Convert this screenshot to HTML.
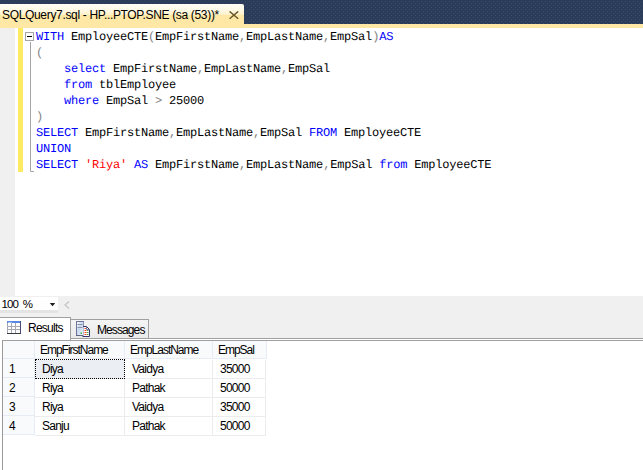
<!DOCTYPE html>
<html><head><meta charset="utf-8">
<style>
*{box-sizing:border-box;margin:0;padding:0}
html,body{width:643px;height:470px;overflow:hidden;background:#fff}
body{position:relative;font-family:"Liberation Sans",sans-serif;font-size:12px;color:#000}
.abs{position:absolute}
#top{left:0;top:0;width:643px;height:24px;background:#2b3c5a}
#tab{left:0;top:4px;width:244px;height:20px;background:linear-gradient(#fffdf6 0,#fffaea 25%,#fff2cc 52%,#ffe8a6 57%,#ffe8a6 100%);border-top-right-radius:2px}
#tabtxt{left:2px;top:8px;font-size:12px;letter-spacing:-0.33px;white-space:nowrap;color:#000}
#band{left:0;top:24px;width:643px;height:4px;background:#ffe8a6}
#gutter{left:0;top:28px;width:15px;height:268px;background:#f0f0f0}
#ybar{left:17.5px;top:28px;width:5.2px;height:144px;background:#ffeb62}
#code{text-rendering:geometricPrecision;left:36px;top:29px;font-family:"Liberation Mono",monospace;font-size:12px;letter-spacing:-0.2px;line-height:16px;white-space:pre;color:#000}
.k{color:#00f}.g{color:#808080}.s{color:#f00}
#strip{left:0;top:296px;width:643px;height:43px;background:#f0f0f0}
#zoom{left:0;top:297px;width:58px;height:13px;background:#fff}
#res{left:2px;top:340px;width:641px;height:130px;background:#fff;border-left:1px solid #9a9a9a;border-top:1px solid #a0a0a0}

#rtab{left:0;top:317px;width:71px;height:23px;background:#fff;border-top:1px solid #a0a0a0;border-right:1px solid #a0a0a0}
#mtab{left:70px;top:319px;width:79px;height:20px;background:linear-gradient(#f4f4f4,#ebebeb);border:1px solid #a0a0a0}
.tl{font-size:12px;line-height:14px;white-space:nowrap;letter-spacing:-0.75px}
#grid{left:3px;top:341px;font-size:12px;letter-spacing:-0.75px}
.row{display:flex;height:19px}
.row.hd{height:18px}
.c{height:100%;border-right:1px solid #e6ecf5;border-bottom:1px solid #e6ecf5;line-height:19px;white-space:nowrap;overflow:hidden}
.row:not(.hd) .c{padding-top:1px}
.row:not(.hd) .c:not(.c0){position:relative;top:1px;padding-top:0;border-color:#ececee}
.hd .c{background:#f9fafc;line-height:19px;letter-spacing:-1.02px}
.hd .c3{width:54px}
.c0{width:32px;padding-left:6px;background:#f9fafc}
.c1{width:90px;padding-left:7px}
.c2{width:88px;padding-left:7px}
.c3{width:53px;padding-left:7px}
.hd .c1,.hd .c2,.hd .c3{padding-left:5px}
.sel{background:#ebeef3;position:relative;overflow:visible}
.sel::after{content:"";position:absolute;left:0;top:-1px;box-sizing:border-box;width:90px;height:20px;border:1px dotted #000}
</style></head><body>
<svg class="abs" style="left:0;top:0" width="643" height="24"><defs><pattern id="dp" width="4" height="4" patternUnits="userSpaceOnUse"><rect width="4" height="4" fill="#2b3b5a"/><rect x="1" y="1" width="1" height="1" fill="#364969"/><rect x="3" y="3" width="1" height="1" fill="#364969"/></pattern></defs><rect width="643" height="24" fill="url(#dp)"/></svg>
<div class="abs" id="tab"></div>
<div class="abs" id="tabtxt">SQLQuery7.sql - HP...PTOP.SNE (sa (53))*</div>
<svg class="abs" style="left:229px;top:11px" width="10" height="9" viewBox="0 0 10 9"><path d="M0.6 0.4 L9.2 7.8 M9.2 0.4 L0.6 7.8" stroke="#665628" stroke-width="1.4" fill="none"/></svg>
<div class="abs" id="band"></div>
<div class="abs" id="gutter"></div>
<div class="abs" id="ybar"></div>
<svg class="abs" style="left:25px;top:28px" width="12" height="146" viewBox="0 0 12 146">
<rect x="0.5" y="4.5" width="8" height="8" fill="#fff" stroke="#a5a5a5"/>
<path d="M2 8.5H7" stroke="#000" stroke-width="1"/>
<path d="M5.5 14V143.5H9" stroke="#a5a5a5" fill="none"/>
</svg>
<div class="abs" id="code"><span class="k">WITH</span> EmployeeCTE<span class="g">(</span>EmpFirstName<span class="g">,</span>EmpLastName<span class="g">,</span>EmpSal<span class="g">)</span><span class="k">AS</span>
<span class="g">(</span>
    <span class="k">select</span> EmpFirstName<span class="g">,</span>EmpLastName<span class="g">,</span>EmpSal
    <span class="k">from</span> tblEmployee
    <span class="k">where</span> EmpSal <span class="g">&gt;</span> 25000
<span class="g">)</span>
<span class="k">SELECT</span> EmpFirstName<span class="g">,</span>EmpLastName<span class="g">,</span>EmpSal <span class="k">FROM</span> EmployeeCTE
<span class="k">UNION</span>
<span class="k">SELECT</span> <span class="s">'Riya'</span> <span class="k">AS</span> EmpFirstName<span class="g">,</span>EmpLastName<span class="g">,</span>EmpSal <span class="k">from</span> EmployeeCTE</div>
<div class="abs" id="strip"></div>
<div class="abs" style="left:0;top:310px;width:58px;height:3px;background:#e4e4e4"></div>
<div class="abs" id="zoom"></div>
<div class="abs" style="left:1.5px;top:297px;font-size:11.5px;line-height:14px;white-space:nowrap;letter-spacing:-0.85px;word-spacing:2.2px">100 %</div>
<svg class="abs" style="left:49px;top:303px" width="7" height="4" viewBox="0 0 7 4"><path d="M0.8 0H6.2L3.5 3.2Z" fill="#1a1a1a"/></svg>
<svg class="abs" style="left:64px;top:301px" width="6" height="8" viewBox="0 0 6 8"><path d="M5 0.5L1 4L5 7.5" stroke="#c4c4c4" stroke-width="1.2" fill="none"/></svg>
<div class="abs" style="left:71px;top:338px;width:572px;height:1px;background:#a0a0a0"></div>
<div class="abs" id="res"></div>
<div class="abs" id="mtab"></div>
<div class="abs" id="rtab"></div>
<svg class="abs" style="left:7px;top:321px" width="14" height="13" viewBox="0 0 14 13">
<rect x="0" y="0" width="14" height="13" fill="#fff"/>
<rect x="0" y="0" width="14" height="2" fill="#5a86e4"/>
<rect x="1" y="1" width="4" height="1" fill="#a8c0f0"/>
<path d="M0.5 2V12.5 M4.5 2V12 M8.5 2V12 M0 5.5H13 M0 8.5H13" stroke="#a6a6b4" stroke-width="1" fill="none"/>
<path d="M13.5 0V13" stroke="#4a4a78" stroke-width="1" fill="none"/>
<path d="M0 12.5H14" stroke="#3a3a48" stroke-width="1" fill="none"/>
</svg>
<div class="abs tl" style="left:28px;top:321px">Results</div>
<svg class="abs" style="left:76px;top:321px" width="15" height="16" viewBox="0 0 15 16">
<defs><linearGradient id="sg" x1="0" y1="0" x2="1" y2="1"><stop offset="0" stop-color="#fff"/><stop offset="0.45" stop-color="#c6d8f0"/><stop offset="1" stop-color="#f2f6fc"/></linearGradient></defs>
<rect x="0.5" y="0.5" width="7" height="14" fill="url(#sg)" stroke="#9094b4"/>
<path d="M0.5 15V0.5H8" fill="none" stroke="#70749a"/>
<path d="M1.5 3.5H6.5 M1.5 6.5H6.5" stroke="#8c92a6" stroke-width="1"/>
<path d="M0 14.5H7" stroke="#60647c"/>
<rect x="4.5" y="11.5" width="1.5" height="1.5" fill="#3cb043"/>
<path d="M7 5.5H11L13.5 8V15.5H7Z" fill="#fff" stroke="none"/>
<path d="M7 5.5H10.5L13.5 8.5V15.5H6.5" fill="none" stroke="#34346e"/>
<path d="M10.5 5.5V8.5H13.5" fill="none" stroke="#5a5a90" stroke-width="0.8"/>
<path d="M7.5 6V15" stroke="#b8bcd4" stroke-width="1"/>
<path d="M8.5 7.5H10 M8.5 9.5H10.5 M8.5 11.5H10.5 M8.5 13.5H10.5" stroke="#f04818" stroke-width="1"/>
<path d="M11.2 9.5H12.4 M11.2 11.5H12.4 M11.2 13.5H12.4" stroke="#2f9a28" stroke-width="1"/>
</svg>
<div class="abs tl" style="left:97px;top:323px;letter-spacing:-0.9px">Messages</div>
<div class="abs" id="grid">
<div class="row hd"><div class="c c0"></div><div class="c c1">EmpFirstName</div><div class="c c2">EmpLastName</div><div class="c c3">EmpSal</div></div>
<div class="row r1"><div class="c c0">1</div><div class="c c1 sel">Diya</div><div class="c c2">Vaidya</div><div class="c c3">35000</div></div>
<div class="row"><div class="c c0">2</div><div class="c c1">Riya</div><div class="c c2">Pathak</div><div class="c c3">50000</div></div>
<div class="row"><div class="c c0">3</div><div class="c c1">Riya</div><div class="c c2">Vaidya</div><div class="c c3">35000</div></div>
<div class="row"><div class="c c0">4</div><div class="c c1">Sanju</div><div class="c c2">Pathak</div><div class="c c3">50000</div></div>
</div>
</body></html>
